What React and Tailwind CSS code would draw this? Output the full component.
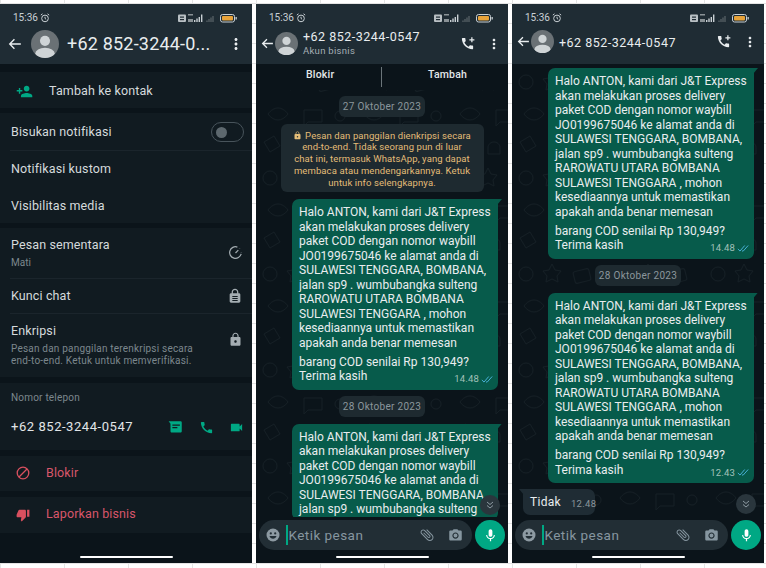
import React from "react";

const P = {
  more: "M12 8c1.1 0 2-.9 2-2s-.9-2-2-2-2 .9-2 2 .9 2 2 2zm0 2c-1.1 0-2 .9-2 2s.9 2 2 2 2-.9 2-2-.9-2-2-2zm0 6c-1.1 0-2 .9-2 2s.9 2 2 2 2-.9 2-2-.9-2-2-2z",
  add: "M15 12c2.21 0 4-1.79 4-4s-1.79-4-4-4-4 1.79-4 4 1.79 4 4 4zm-9-2V7H4v3H1v2h3v3h2v-3h3v-2H6zm9 4c-2.67 0-8 1.34-8 4v2h16v-2c0-2.66-5.33-4-8-4z",
  call: "M20.01 15.38c-1.23 0-2.42-.2-3.53-.56-.35-.12-.74-.03-1.01.24l-1.57 1.97c-2.83-1.35-5.48-3.9-6.89-6.83l1.95-1.66c.27-.28.35-.67.24-1.02-.37-1.11-.56-2.3-.56-3.53 0-.54-.45-.99-.99-.99H4.19C3.65 3 3 3.24 3 3.99 3 13.28 10.73 21 20.01 21c.71 0 .99-.63.99-1.18v-3.45c0-.54-.45-.99-.99-.99z",
  video: "M17 10.5V7c0-.55-.45-1-1-1H4c-.55 0-1 .45-1 1v10c0 .55.45 1 1 1h12c.55 0 1-.45 1-1v-3.5l4 4v-11l-4 4z",
  lock: "M18 8h-1V6c0-2.76-2.24-5-5-5S7 3.24 7 6v2H6c-1.1 0-2 .9-2 2v10c0 1.1.9 2 2 2h12c1.1 0 2-.9 2-2V10c0-1.1-.9-2-2-2zm-6 9c-1.1 0-2-.9-2-2s.9-2 2-2 2 .9 2 2-.9 2-2 2zm3.1-9H8.9V6c0-1.71 1.39-3.1 3.1-3.1 1.71 0 3.1 1.39 3.1 3.1v2z",
  down: "M15 3H6c-.83 0-1.54.5-1.84 1.22l-3.02 7.05c-.09.23-.14.47-.14.73v2c0 1.1.9 2 2 2h6.31l-.95 4.57-.03.32c0 .41.17.79.44 1.06L9.83 23l6.59-6.59c.36-.36.58-.86.58-1.41V5c0-1.1-.9-2-2-2zm4 0v12h4V3h-4z",
  mic: "M12 14c1.66 0 3-1.34 3-3V5c0-1.66-1.34-3-3-3S9 3.34 9 5v6c0 1.66 1.34 3 3 3zm5.3-3c0 3-2.54 5.1-5.3 5.1S6.7 14 6.7 11H5c0 3.41 2.72 6.23 6 6.72V21h2v-3.28c3.28-.48 6-3.3 6-6.72h-1.7z",
  camera: "M9 2 7.17 4H4c-1.1 0-2 .9-2 2v12c0 1.1.9 2 2 2h16c1.1 0 2-.9 2-2V6c0-1.1-.9-2-2-2h-3.17L15 2H9zm3 15c-2.76 0-5-2.24-5-5s2.24-5 5-5 5 2.24 5 5-2.24 5-5 5zm0-1.8a3.2 3.2 0 1 0 0-6.4 3.2 3.2 0 0 0 0 6.4z",
  clip: "M16.5 6v11.5c0 2.21-1.79 4-4 4s-4-1.79-4-4V5c0-1.38 1.12-2.5 2.5-2.5s2.5 1.12 2.5 2.5v10.5c0 .55-.45 1-1 1s-1-.45-1-1V6H10v9.5c0 1.38 1.12 2.5 2.5 2.5s2.5-1.12 2.5-2.5V5c0-2.21-1.79-4-4-4S7 2.79 7 5v12.5c0 3.04 2.46 5.5 5.5 5.5s5.5-2.46 5.5-5.5V6h-1.5z",
  msg: "M4 2h16c1.1 0 2 .9 2 2v14c0 1.1-.9 2-2 2H6c-1.1 0-2-.9-2-2V6L1 2h3zm3 5v2h12V7H7zm0 4v2h8v-2H7z",
};

function I({ d, s = 16, c = "", ...r }) {
  return (
    <svg width={s} height={s} viewBox="0 0 24 24" fill="currentColor" fillRule="evenodd" className={"shrink-0 " + c} {...r}>
      <path d={d} />
    </svg>
  );
}

function Back({ s = 14 }) {
  return (
    <svg width={s} height={s} viewBox="0 0 24 24" fill="none" stroke="#e9edef" strokeWidth="2.4" className="shrink-0">
      <path d="M22 12H3M11 4l-8 8 8 8" />
    </svg>
  );
}

function Avatar({ s }) {
  return (
    <svg width={s} height={s} viewBox="0 0 40 40" className="shrink-0">
      <defs>
        <clipPath id={"av" + s}><circle cx="20" cy="20" r="20" /></clipPath>
      </defs>
      <g clipPath={`url(#av${s})`}>
        <rect width="40" height="40" fill="#6a7175" />
        <circle cx="20" cy="15.5" r="7.2" fill="#cfd4d6" />
        <ellipse cx="20" cy="34" rx="14" ry="8.5" fill="#cfd4d6" />
      </g>
    </svg>
  );
}

function Status() {
  return (
    <div className="flex h-[26px] items-center justify-between pt-[1px] pl-[13px] pr-[14px] text-[10px] text-[#c9d0d4]">
      <div className="flex items-center gap-[2px]">
        <span>15:36</span>
        <svg width="10" height="10" viewBox="0 0 12 12" fill="none" stroke="#c9d0d4" strokeWidth="1.2">
          <circle cx="6" cy="6.5" r="4" />
          <path d="M6 4.5v2l1.3 1M1 2.5 3 1M11 2.5 9 1" />
        </svg>
      </div>
      <svg width="60" height="10" viewBox="0 0 60 10">
        <rect x="0" y="1.5" width="8" height="7.5" rx="1" fill="#b9c0c4" />
        <rect x="2" y="3.5" width="4" height="1.2" fill="#1f2c34" />
        <rect x="2" y="6" width="4" height="1.2" fill="#1f2c34" />
        <rect x="10" y="1" width="5" height="1.5" fill="#8a9296" />
        <rect x="10" y="6" width="5" height="3" fill="#8a9296" />
        <path d="M16 9V7h1.4v2zM18.3 9V5.5h1.4V9zM20.6 9V4h1.4v5zM23 9V1.5h1.4V9z" fill="#c9d0d4" />
        <path d="M28.5 9V7.5h1v1.5zM30.5 9V6h1v3zM32.5 9V4.5h1V9zM34.5 9V3h1v6z" fill="#687075" />
        <rect x="42.5" y="1.5" width="14" height="7.5" rx="2" fill="none" stroke="#c9d0d4" strokeWidth="1" />
        <rect x="44" y="3" width="11" height="4.5" rx="1" fill="#e8a33a" />
        <rect x="57.5" y="4" width="1.3" height="2.5" fill="#c9d0d4" />
      </svg>
    </div>
  );
}

function Home({ bg = "" }) {
  return (
    <div className={"flex h-[13px] justify-center pt-[6px] " + bg}>
      <div className="h-[2px] w-[93px] rounded-full bg-white" />
    </div>
  );
}

function Row({ children, right, cls = "" }) {
  return (
    <div className={"flex items-center justify-between pl-[11px] pr-[9px] " + cls}>
      <div>{children}</div>
      {right}
    </div>
  );
}

const Line = () => <div className="ml-[10px] h-px bg-[#1b252c]" />;

function InfoPanel() {
  return (
    <div className="flex h-[559px] w-[252px] shrink-0 flex-col bg-[#0b141a]">
      <div className="h-[60px] bg-[#1f2c34]">
        <Status />
        <div className="flex items-center pl-[8px] pr-[7px]">
          <Back />
          <div className="ml-[9px]"><Avatar s={28} /></div>
          <span className="ml-[8px] flex-1 whitespace-nowrap text-[18px] leading-[28px] tracking-[0.2px] text-[#e9edef]">+62 852-3244-0...</span>
          <I d={P.more} s={18} c="text-[#e9edef]" />
        </div>
      </div>
      <div className="mt-[8px] flex h-[36px] items-center bg-[#111b21] pl-[16px] pt-[2px] text-[12.5px] tracking-[0.12px] text-[#d5dadc]">
        <I d={P.add} s={17} c="text-[#00a884]" />
        <span className="ml-[16px]">Tambah ke kontak</span>
      </div>
      <div className="mt-[5px] bg-[#111b21] text-[12.5px] tracking-[0.12px] text-[#d5dadc]">
        <Row cls="h-[37px] pt-[1px]" right={
          <div className="mr-[-1px] flex h-[20px] w-[33px] items-center rounded-full border border-[#48545b] pl-[4px]">
            <div className="h-[11px] w-[11px] rounded-full bg-[#5d686e]" />
          </div>
        }>Bisukan notifikasi</Row>
        <Line />
        <Row cls="h-[36px]">Notifikasi kustom</Row>
        <Row cls="h-[36px] pt-[2px]">Visibilitas media</Row>
      </div>
      <div className="mt-[5px] bg-[#111b21] text-[12.5px] tracking-[0.12px] text-[#d5dadc]">
        <Row cls="h-[50px] pb-[1px]" right={
          <svg width="15" height="15" viewBox="0 0 16 16" fill="none" stroke="#a4adb2" strokeWidth="1.3">
            <path d="M10 2.2A6.2 6.2 0 1 0 14 9.5" />
            <path d="M8 8.5 11 5.5" />
            <path d="M12.3 3.8v.1M13.8 5.8v.1M14.2 7.8v.1" strokeWidth="1.6" />
          </svg>
        }>
          <div>Pesan sementara</div>
          <div className="mt-[3px] text-[10px] leading-[12px] tracking-normal text-[#7c878d]">Mati</div>
        </Row>
        <Line />
        <Row cls="h-[34px]" right={
          <svg width="16" height="16" viewBox="0 0 24 24" className="text-[#a4adb2]" fill="currentColor" fillRule="evenodd">
            <path d="M18 8h-1V6c0-2.76-2.24-5-5-5S7 3.24 7 6v2H6c-1.1 0-2 .9-2 2v10c0 1.1.9 2 2 2h12c1.1 0 2-.9 2-2V10c0-1.1-.9-2-2-2zM8 12h8v1.6H8zm0 3h8v1.6H8zm0 3h8v1.4H8zM15.1 8H8.9V6c0-1.71 1.39-3.1 3.1-3.1 1.71 0 3.1 1.39 3.1 3.1v2z" />
          </svg>
        }>Kunci chat</Row>
        <Line />
        <Row cls="h-[63px] !items-start pt-[9px]" right={<I d={P.lock} s={15} c="mt-[9px] text-[#a4adb2]" />}>
          <div className="leading-[16px]">Enkripsi</div>
          <div className="mt-[4px] text-[10px] leading-[12px] tracking-[0.2px] whitespace-nowrap text-[#7c878d]">
            Pesan dan panggilan terenkripsi secara<br />end-to-end. Ketuk untuk memverifikasi.
          </div>
        </Row>
      </div>
      <div className="mt-[6px] bg-[#111b21]">
        <div className="pl-[11px] pt-[8px] text-[10px] leading-[13px] tracking-[0.2px] text-[#7c878d]">Nomor telepon</div>
        <div className="flex h-[46px] items-center pl-[11px] pr-[8px] text-[13px] tracking-[0.55px] text-[#e1e5e7]">
          <span className="flex-1">+62 852-3244-0547</span>
          <I d={P.msg} s={15} c="text-[#00a884]" />
          <I d={P.call} s={15} c="ml-[16px] text-[#00a884]" />
          <I d={P.video} s={15} c="ml-[15px] text-[#00a884]" />
        </div>
      </div>
      <div className="mt-[6px] flex h-[35px] items-center bg-[#111b21] pb-[1px] pl-[16px] text-[12.5px] tracking-[0.12px] text-[#d8566a]">
        <svg width="14" height="14" viewBox="0 0 14 14" fill="none" stroke="#d8505f" strokeWidth="1.3" className="shrink-0">
          <circle cx="7" cy="7" r="5.8" /><path d="M3 11 11 3" />
        </svg>
        <span className="ml-[16px]">Blokir</span>
      </div>
      <div className="mt-[6px] flex h-[36px] items-center bg-[#111b21] pb-[1px] pl-[16px] text-[12.5px] tracking-[0.12px] text-[#d8566a]">
        <I d={P.down} s={14} c="text-[#d8505f]" />
        <span className="ml-[16px]">Laporkan bisnis</span>
      </div>
      <div className="flex-1" />
      <Home />
    </div>
  );
}

function ChatHeader({ sub }) {
  return (
    <div className="h-[60px] shrink-0 bg-[#1f2c34]">
      <Status />
      <div className="flex items-center pl-[5px] pr-[6px]">
        <Back s={13} />
        <div className="ml-[1px]"><Avatar s={23} /></div>
        <div className={"ml-[5px] flex-1 whitespace-nowrap text-[#e9edef] " + (sub ? "-mt-[1px]" : "mt-[1px]")}>
          <div className="text-[12.5px] leading-[15px] tracking-[0.5px]">+62 852-3244-0547</div>
          {sub && <div className="text-[9.5px] leading-[13px] tracking-[0.3px] text-[#a5afb5]">{sub}</div>}
        </div>
        <svg width="15" height="15" viewBox="0 0 24 24" fill="#e9edef" className="shrink-0">
          <path d={P.call} />
          <path d="M15 5h3V2h2v3h3v2h-3v3h-2V7h-3z" />
        </svg>
        <I d={P.more} s={16} c="ml-[11px] text-[#e9edef]" />
      </div>
    </div>
  );
}

function DateChip({ t, cls = "" }) {
  return (
    <div className={"flex h-[21px] w-[86px] items-center justify-center self-center rounded-md bg-[#1e2a30] text-[10px] tracking-[0.3px] text-[#8b969c] " + cls}>{t}</div>
  );
}

const LINES = [
  "Halo ANTON, kami dari J&T Express",
  "akan melakukan proses delivery",
  "paket COD dengan nomor waybill",
  "JO0199675046 ke alamat anda di",
  "SULAWESI TENGGARA, BOMBANA,",
  "jalan sp9 . wumbubangka sulteng",
  "RAROWATU UTARA BOMBANA",
  "SULAWESI TENGGARA , mohon",
  "kesediaannya untuk memastikan",
  "apakah anda benar memesan",
];

function Bubble({ time, cut, cls = "", lines = 10 }) {
  return (
    <div className={"relative mr-[10px] w-[206px] self-end shrink-0 rounded-[7px] rounded-tr-none bg-[#075b4b] pl-[7px] pt-[6px] pb-[3px] text-[12px] leading-[14.5px] tracking-[0px] whitespace-nowrap text-[#e9edef] " + cls}>
      <div className="absolute right-[-4px] top-0 h-[6px] w-[5px] bg-[#075b4b] [clip-path:polygon(0_0,100%_0,0_100%)]" />
      {LINES.slice(0, lines).map((l) => <div key={l}>{l}</div>)}
      {!cut && (
        <>
          <div className="mt-[4.5px]">barang COD senilai Rp 130,949?</div>
          <div className="flex justify-between pr-[5px]">
            <span>Terima kasih</span>
            <span className="mt-[3px] flex items-center gap-[2px] text-[9.5px] tracking-[0.2px] text-[#a3c2ba]">
              {time}
              <svg width="12" height="9" viewBox="0 0 14 10" fill="none" stroke="#53bdeb" strokeWidth="1">
                <path d="M1 5.5 3.5 8 9 1.5M6 7.5l1 .8L13 1.5" />
              </svg>
            </span>
          </div>
        </>
      )}
    </div>
  );
}

function Doodles() {
  const shapes = (
    <g fill="none" stroke="#151f25" strokeWidth="1">
      <circle cx="14" cy="18" r="7" /><path d="M40 8l3 6 6 1-4 5 1 6-6-3-6 3 1-6-4-5 6-1z" />
      <rect x="62" y="14" width="16" height="12" rx="2" transform="rotate(-14 70 20)" />
      <path d="M12 50c6-8 14-8 20 0-6 8-14 8-20 0zM48 46h18v12H52l-4 4z" />
      <circle cx="84" cy="52" r="5" /><path d="M8 78l10-6 6 10-10 6zM40 84c0-8 12-8 12 0v6H40zM70 76c5 0 9 4 9 9s-4 9-9 9-9-4-9-9 4-9 9-9zM66 83h.1M74 83h.1" />
    </g>
  );
  return (
    <svg className="pointer-events-none absolute inset-0 h-full w-full">
      <defs>
        <pattern id="wp" width="96" height="96" patternUnits="userSpaceOnUse">{shapes}</pattern>
      </defs>
      <rect width="100%" height="100%" fill="url(#wp)" />
    </svg>
  );
}

function Composer() {
  return (
    <div className="flex h-[30px] shrink-0 gap-[3px] pl-[3px] pr-[3px]">
      <div className="flex flex-1 items-center rounded-full bg-[#222e35] pl-[7px] pr-[9px] text-[#8696a0]">
        <svg width="14" height="14" viewBox="0 0 14 14" className="shrink-0">
          <circle cx="7" cy="7" r="6.5" fill="#8d9aa2" />
          <circle cx="4.8" cy="5.4" r="1.1" fill="#222e35" />
          <circle cx="9.2" cy="5.4" r="1.1" fill="#222e35" />
          <path d="M3.5 8h7c-.5 1.8-1.9 2.8-3.5 2.8S4 9.8 3.5 8z" fill="#222e35" />
        </svg>
        <div className="ml-[6px] h-[20px] w-[1.5px] bg-[#00a884]" />
        <span className="ml-[1px] flex-1 text-[13.5px] tracking-[0.45px]">Ketik pesan</span>
        <I d={P.clip} s={16} style={{ transform: "rotate(-45deg)" }} />
        <I d={P.camera} s={15} c="ml-[13px]" />
      </div>
      <div className="flex h-[30px] w-[30px] items-center justify-center rounded-full bg-[#00a884]">
        <I d={P.mic} s={15} c="text-white" />
      </div>
    </div>
  );
}

function ScrollDown({ cls = "" }) {
  return (
    <div className={"absolute right-[8px] flex h-[20px] w-[20px] items-center justify-center rounded-full bg-[#2a363d] " + cls}>
      <svg width="10" height="10" viewBox="0 0 10 10" fill="none" stroke="#8d9aa2" strokeWidth="1">
        <path d="M2 2l3 2.5L8 2M2 5.5 5 8l3-2.5" />
      </svg>
    </div>
  );
}

function Chat2() {
  return (
    <div className="relative flex h-[559px] w-[252px] shrink-0 flex-col overflow-hidden bg-[#0b141a]">
      <ChatHeader sub="Akun bisnis" />
      <div className="relative flex h-[453px] shrink-0 flex-col overflow-hidden">
        <Doodles />
        <div className="relative flex h-[26px] shrink-0 items-center bg-[#0b141a] text-[10.5px] font-medium tracking-[0.2px] text-[#e3e7e9]">
          <span className="-mt-[4px] flex-1 pl-[50px]">Blokir</span>
          <div className="h-[20px] w-px bg-[#6b757a]" />
          <span className="-mt-[4px] w-[126px] pl-[46px]">Tambah</span>
        </div>
        <div className="relative flex flex-col">
          <DateChip t="27 Oktober 2023" cls="mt-[6px]" />
          <div className="mt-[7px] flex h-[68px] w-[203px] flex-col items-center justify-center self-center rounded-md bg-[#1e2a30] pt-[2px] text-center text-[9.5px] leading-[11.7px] tracking-[0.1px] whitespace-nowrap text-[#e4bd78]">
            <div className="flex items-center gap-[3px]"><I d={P.lock} s={9} />Pesan dan panggilan dienkripsi secara</div>
            <div>end-to-end. Tidak seorang pun di luar</div>
            <div>chat ini, termasuk WhatsApp, yang dapat</div>
            <div>membaca atau mendengarkannya. Ketuk</div>
            <div>untuk info selengkapnya.</div>
          </div>
          <Bubble time="14.48" cls="mt-[7px]" />
          <DateChip t="28 Oktober 2023" cls="mt-[6px]" />
          <Bubble cut lines={6} cls="mt-[7px]" />
        </div>
        <ScrollDown cls="bottom-[2px]" />
      </div>
      <div className="h-[3px] shrink-0" />
      <Composer />
      <Home />
    </div>
  );
}

function Chat3() {
  return (
    <div className="relative flex h-[559px] w-[252px] shrink-0 flex-col overflow-hidden bg-[#0b141a]">
      <ChatHeader />
      <div className="relative flex h-[453px] shrink-0 flex-col overflow-hidden">
        <Doodles />
        <div className="relative flex flex-col">
          <Bubble time="14.48" cls="mt-[4px]" />
          <DateChip t="28 Oktober 2023" cls="mt-[6px]" />
          <Bubble time="12.43" cls="mt-[7px]" />
          <div className="relative ml-[11px] mt-[6px] flex h-[26px] w-[72px] items-center rounded-[7px] rounded-tl-none bg-[#1f2c34] pl-[7px] text-[12px] tracking-[0.3px] text-[#e9edef]">
            <div className="absolute left-[-4px] top-0 h-[6px] w-[5px] bg-[#1f2c34] [clip-path:polygon(0_0,100%_0,100%_100%)]" />
            Tidak
            <span className="ml-[10px] mt-[4px] text-[9.5px] text-[#8b969c]">12.48</span>
          </div>
        </div>
        <ScrollDown cls="bottom-[3px]" />
      </div>
      <div className="h-[3px] shrink-0" />
      <Composer />
      <Home />
    </div>
  );
}

export default function App() {
  return (
    <div
      className="flex h-[568px] w-[766px] gap-[4px] overflow-hidden bg-white bg-[linear-gradient(#e4e4e4_1px,transparent_1px),linear-gradient(90deg,#e4e4e4_1px,transparent_1px)] bg-[size:64px_20px] bg-[position:0_3px] pt-[4px]"
      style={{ fontFamily: "Roboto, 'Noto Sans', sans-serif" }}
    >
      <InfoPanel />
      <Chat2 />
      <Chat3 />
    </div>
  );
}
